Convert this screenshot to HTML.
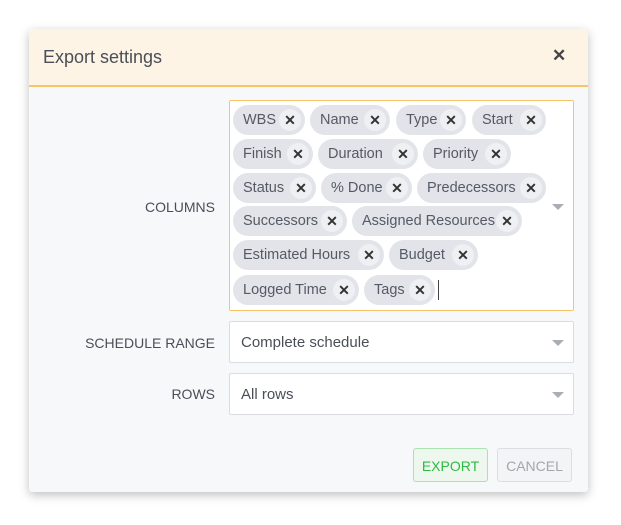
<!DOCTYPE html>
<html><head><meta charset="utf-8"><style>
*{box-sizing:border-box;margin:0;padding:0}
body{width:621px;height:525px;background:#fff;font-family:"Liberation Sans",sans-serif;position:relative;overflow:hidden}
.dlg{position:absolute;left:29px;top:29px;width:559px;height:463px;background:#f7f8fa;border-radius:3px;box-shadow:0 3px 10px rgba(0,0,0,.25);overflow:hidden}
.hd{position:absolute;left:0;top:0;width:100%;height:58px;background:#fdf4e5;border-bottom:2px solid #f9c56a}
.hd .t{position:absolute;left:14px;top:18px;font-size:18px;color:#4a4f57}
.hd .x{position:absolute;left:523px;top:17px;font-size:17px;font-weight:bold;color:#444}
.lbl{position:absolute;right:406px;font-size:14px;color:#4a4f57;text-align:right;white-space:nowrap}
.box{position:absolute;left:229px;width:345px;background:#fff;border:1px solid #d9dce1;border-radius:2px}
.chip{position:absolute;height:30px;background:#e2e4e9;border-radius:15px;font-size:14.5px;color:#555a64;line-height:30px;padding-left:10px;white-space:nowrap}
.chip i{position:absolute;right:4px;top:4px;width:22px;height:22px;border-radius:11px;background:#eef0f3;font-style:normal;font-weight:bold;text-align:center;line-height:22px;font-size:14px;color:#333}
.arr{position:absolute;width:0;height:0;border-left:6px solid transparent;border-right:6px solid transparent;border-top:6px solid #a9adb4}
.sel{font-size:15px;color:#4a4f57;line-height:42px;padding-left:11px}
.btn{position:absolute;top:448px;height:34px;width:75px;border-radius:3px;font-size:14px;text-align:center;line-height:34px}
</style></head><body>
<div class="dlg">
<div class="hd"><div class="t">Export settings</div><div class="x">✕</div></div>
</div>
<div class="lbl" style="top:199px">COLUMNS</div>
<div class="lbl" style="top:335px">SCHEDULE RANGE</div>
<div class="lbl" style="top:386px">ROWS</div>
<div class="box" style="top:100px;height:211px;border-color:#f9c56a"></div>
<div class="arr" style="left:552px;top:204px"></div>
<div class="chip" style="left:233px;top:105px;width:72px">WBS<i>✕</i></div>
<div class="chip" style="left:310px;top:105px;width:80px">Name<i>✕</i></div>
<div class="chip" style="left:396px;top:105px;width:70px">Type<i>✕</i></div>
<div class="chip" style="left:472px;top:105px;width:74px">Start<i>✕</i></div>
<div class="chip" style="left:233px;top:139px;width:80px">Finish<i>✕</i></div>
<div class="chip" style="left:318px;top:139px;width:100px">Duration<i>✕</i></div>
<div class="chip" style="left:423px;top:139px;width:88px">Priority<i>✕</i></div>
<div class="chip" style="left:233px;top:173px;width:83px">Status<i>✕</i></div>
<div class="chip" style="left:321px;top:173px;width:91px">% Done<i>✕</i></div>
<div class="chip" style="left:417px;top:173px;width:129px">Predecessors<i>✕</i></div>
<div class="chip" style="left:233px;top:206px;width:114px">Successors<i>✕</i></div>
<div class="chip" style="left:352px;top:206px;width:170px">Assigned Resources<i>✕</i></div>
<div class="chip" style="left:233px;top:240px;width:151px">Estimated Hours<i>✕</i></div>
<div class="chip" style="left:389px;top:240px;width:89px">Budget<i>✕</i></div>
<div class="chip" style="left:233px;top:275px;width:126px">Logged Time<i>✕</i></div>
<div class="chip" style="left:364px;top:275px;width:71px">Tags<i>✕</i></div>
<div style="position:absolute;left:438px;top:280px;width:1px;height:20px;background:#444"></div>
<div class="box sel" style="top:321px;height:42px">Complete schedule</div>
<div class="arr" style="left:552px;top:340px"></div>
<div class="box sel" style="top:373px;height:42px">All rows</div>
<div class="arr" style="left:552px;top:392px"></div>
<div class="btn" style="left:413px;background:#edf7ee;border:1px solid #a9e3b0;color:#2dbb43">EXPORT</div>
<div class="btn" style="left:497px;background:#f3f4f6;border:1px solid #dcdee2;color:#a3a6ab">CANCEL</div>
</body></html>
